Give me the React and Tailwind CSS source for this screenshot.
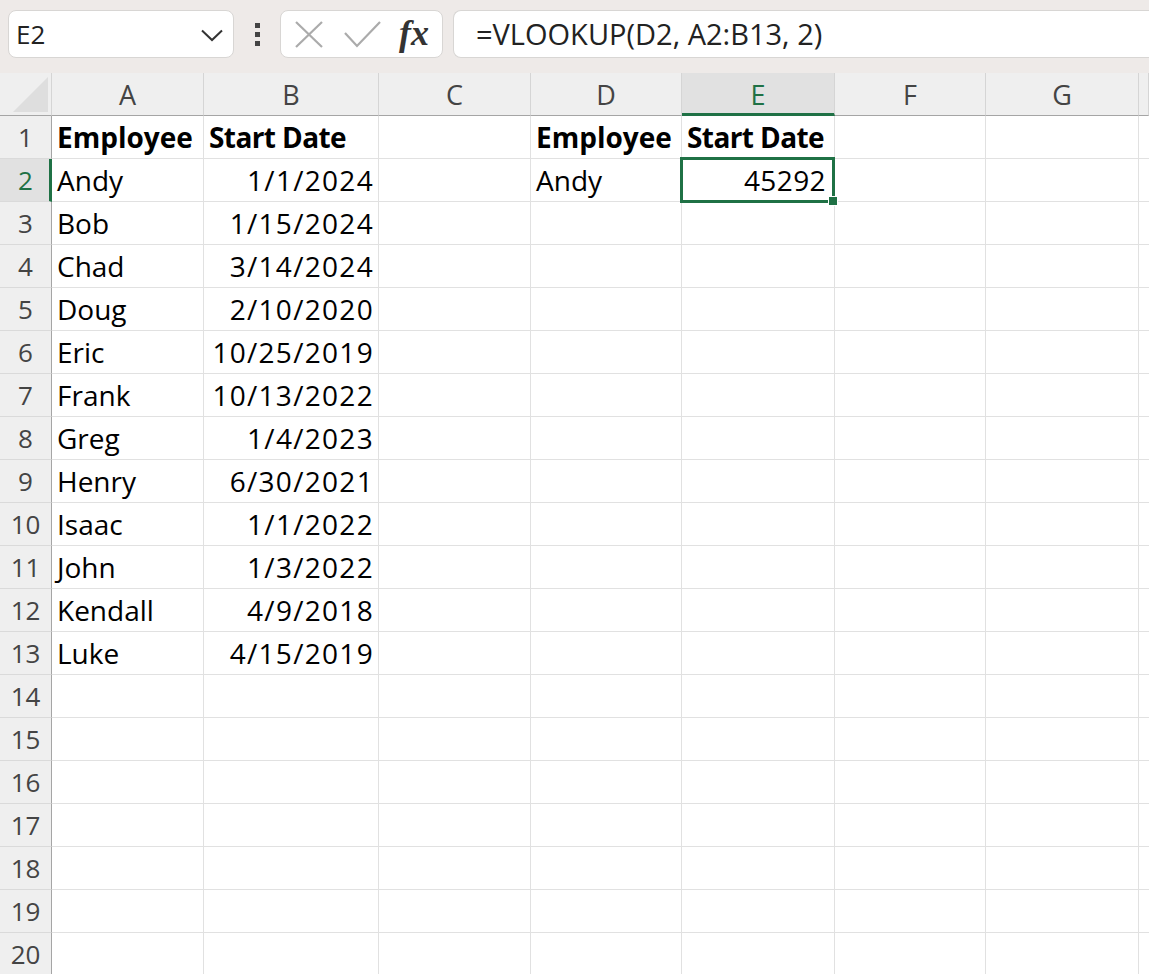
import React from 'react';

const W = ['w-[152px]', 'w-[175px]', 'w-[152px]', 'w-[151px]', 'w-[153px]', 'w-[151px]', 'w-[153px]', 'flex-1'];
const LETTERS = ['A', 'B', 'C', 'D', 'E', 'F', 'G', ''];

const DATA = [
  ['Andy', '1/1/2024'],
  ['Bob', '1/15/2024'],
  ['Chad', '3/14/2024'],
  ['Doug', '2/10/2020'],
  ['Eric', '10/25/2019'],
  ['Frank', '10/13/2022'],
  ['Greg', '1/4/2023'],
  ['Henry', '6/30/2021'],
  ['Isaac', '1/1/2022'],
  ['John', '1/3/2022'],
  ['Kendall', '4/9/2018'],
  ['Luke', '4/15/2019'],
];

function cellsFor(r) {
  const c = Array.from({ length: 8 }, () => null);
  if (r === 1) {
    c[0] = { t: 'Employee', b: true };
    c[1] = { t: 'Start Date', b: true, tight: true };
    c[3] = { t: 'Employee', b: true };
    c[4] = { t: 'Start Date', b: true, tight: true };
  } else if (r <= 13) {
    const d = DATA[r - 2];
    c[0] = { t: d[0] };
    c[1] = { t: d[1], right: true, date: true };
  }
  if (r === 2) {
    c[3] = { t: 'Andy' };
    c[4] = { t: '45292', right: true, pr: true };
  }
  return c;
}

function TopBar() {
  return (
    <div className="h-[73px] bg-[#eeeae8] flex items-start pt-[10px] pl-[8px]">
      <div className="w-[226px] h-[48px] bg-white rounded-[8px] border border-[#d8d6d4] flex items-center justify-between pl-[7px] pr-[10px]">
        <span className="text-[26px] text-[#222] leading-none">E2</span>
        <svg width="22" height="13" viewBox="0 0 22 13" className="mt-[2px]">
          <polyline points="1,1.5 11,11 21,1.5" fill="none" stroke="#333" strokeWidth="2" />
        </svg>
      </div>
      <div className="w-[46px] h-[48px] flex flex-col items-center justify-center gap-[4px] pl-[1px]">
        <div className="w-[5px] h-[5px] bg-[#444]" />
        <div className="w-[5px] h-[5px] bg-[#444]" />
        <div className="w-[5px] h-[5px] bg-[#444]" />
      </div>
      <div className="w-[163px] h-[48px] bg-white rounded-[8px] border border-[#d8d6d4] flex items-center pl-[14px]">
        <svg width="28" height="27" viewBox="0 0 28 27">
          <line x1="1" y1="1" x2="27" y2="26" stroke="#ababab" strokeWidth="2.2" />
          <line x1="27" y1="1" x2="1" y2="26" stroke="#ababab" strokeWidth="2.2" />
        </svg>
        <svg width="37" height="27" viewBox="0 0 37 27" className="ml-[21px]">
          <polyline points="1,12 13,25 36,1" fill="none" stroke="#ababab" strokeWidth="2.2" />
        </svg>
        <span className="ml-[18px] font-['Liberation_Serif',serif] italic font-bold text-[36px] leading-none text-[#333] -mt-[2px]">fx</span>
      </div>
      <div className="flex-1 ml-[10px] h-[48px] bg-white rounded-l-[8px] border border-r-0 border-[#d8d6d4] flex items-center pl-[22px]">
        <span className="text-[29px] leading-[46px] text-[#222] whitespace-nowrap">=VLOOKUP(D2, A2:B13, 2)</span>
      </div>
    </div>
  );
}

function HeaderRow() {
  return (
    <div className="flex h-[43px] bg-[#efefef]">
      <div className="w-[52px] shrink-0 h-full border-r border-b border-r-[#d5d5d5] border-b-[#a5a5a5] relative">
        <svg width="36" height="36" viewBox="0 0 36 36" className="absolute left-[13px] top-[4px]">
          <polygon points="35,0 35,35 0,35" fill="#dedede" />
        </svg>
      </div>
      {LETTERS.map((l, i) => {
        const sel = l === 'E';
        return (
          <div
            key={i}
            className={`${W[i]} shrink-0 h-full border-r border-r-[#d5d5d5] flex justify-center overflow-hidden ${
              sel ? 'bg-[#e1e1e1] border-b-[3px] border-b-[#1f7145] text-[#1f7145]' : 'border-b border-b-[#a5a5a5] text-[#444]'
            }`}
          >
            <span className="text-[27px] leading-[44px]">{l}</span>
          </div>
        );
      })}
    </div>
  );
}

function Row({ r }) {
  const cells = cellsFor(r);
  const sel = r === 2;
  return (
    <div className="flex h-[43px]">
      <div
        className={`w-[52px] shrink-0 h-full border-b border-b-[#dadada] flex justify-center overflow-hidden ${
          sel ? 'bg-[#e1e1e1] border-r-[3px] border-r-[#1f7145] text-[#1f7145] pl-[2px]' : 'bg-[#efefef] border-r border-r-[#a5a5a5] text-[#444]'
        }`}
      >
        <span className="text-[26px] leading-[42px]">{r}</span>
      </div>
      {cells.map((c, i) => (
        <div
          key={i}
          className={`${W[i]} shrink-0 h-full border-r border-b border-[#e1e1e1] flex ${
            c && c.right ? 'justify-end' : 'justify-start'
          } ${c && c.pr ? 'pr-[8px]' : c && c.date ? 'pr-[4px]' : 'pr-[5px]'} pl-[5px]`}
        >
          {c && (
            <span
              className={`text-[28px] leading-[42px] whitespace-nowrap text-black ${c.b ? 'font-bold' : ''} ${
                c.date ? 'tracking-[1.3px]' : ''
              } ${c.tight ? 'tracking-[-0.6px]' : ''} ${c.pr ? 'tracking-[0.4px]' : ''}`}
            >
              {c.t}
            </span>
          )}
        </div>
      ))}
    </div>
  );
}

export default function App() {
  const rows = Array.from({ length: 20 }, (_, i) => i + 1);
  return (
    <div className="relative w-[1149px] h-[974px] overflow-hidden bg-white font-['Open_Sans',sans-serif]">
      <TopBar />
      <HeaderRow />
      {rows.map((r) => (
        <Row key={r} r={r} />
      ))}
      <div className="absolute left-[680px] top-[157px] w-[155px] h-[46px] border-[3px] border-[#1f7145]" />
      <div className="absolute left-[828px] top-[196px] w-[10px] h-[10px] bg-[#1f7145] border border-white" />
    </div>
  );
}
